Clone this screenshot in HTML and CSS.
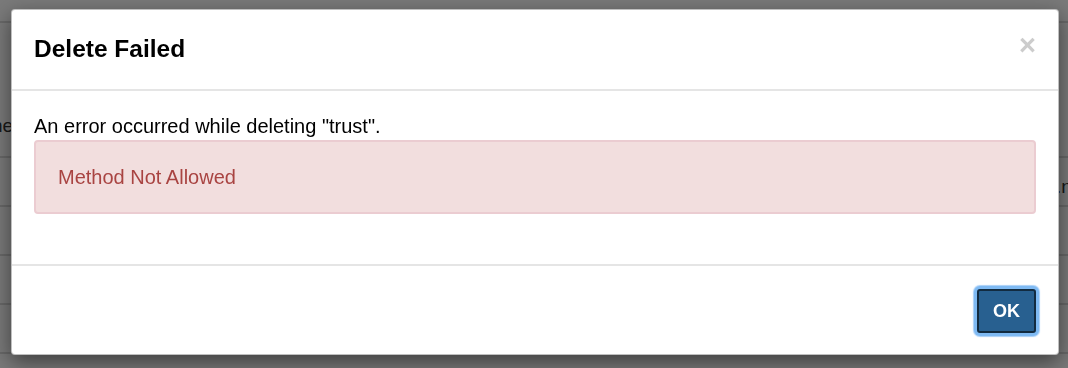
FILE: index.html
```html
<!DOCTYPE html>
<html>
<head>
<meta charset="utf-8">
<link rel="stylesheet" href="styles.css">
</head>
<body>
<div class="page">
  <div class="row row-top"></div>
  <div class="row row-head"><span class="clip-left">ne</span></div>
  <div class="row row-item"><span class="clip-right">.n</span></div>
  <div class="row row-item"></div>
  <div class="row row-item"></div>
  <div class="row row-item"></div>
</div>
<div class="backdrop"></div>
<div class="modal">
  <div class="modal-header">
    <h4 class="modal-title">Delete Failed</h4>
    <button class="close" type="button">×</button>
  </div>
  <div class="modal-body">
    <p class="message">An error occurred while deleting "trust".</p>
    <div class="alert">Method Not Allowed</div>
  </div>
  <div class="modal-footer">
    <button class="btn-ok" type="button">OK</button>
  </div>
</div>
</body>
</html>
```

FILE: styles.css
```css
html, body {
  margin: 0;
  padding: 0;
  background: #ffffff;
  font-family: "Liberation Sans", Arial, Helvetica, sans-serif;
  overflow: hidden;
  width: 1068px;
  height: 368px;
}

.page {
  width: 1068px;
}

.row {
  border-bottom: 2px solid #dcdcdc;
  display: flex;
  align-items: center;
  color: #333;
  font-size: 19px;
}

.row-top { height: 21px; }
.row-head { height: 133px; align-items: flex-end; }
.row-item { height: 47px; }

.clip-left {
  margin-left: -8px;
  margin-bottom: 19px;
  white-space: nowrap;
}

.clip-right {
  margin-left: 1056px;
  margin-top: 10px;
  white-space: nowrap;
}

.backdrop {
  position: fixed;
  inset: 0;
  background: rgba(0, 0, 0, 0.52);
}

.modal {
  position: absolute;
  left: 11px;
  top: 9px;
  width: 1046px;
  background: #fff;
  border: 1px solid rgba(0, 0, 0, 0.25);
  border-radius: 4px;
  box-shadow: 0 7px 21px rgba(0, 0, 0, 0.5);
}

.modal-header {
  display: flex;
  justify-content: space-between;
  align-items: flex-start;
  padding: 21px 22px 22px 22px;
  border-bottom: 2px solid #e5e5e5;
}

.modal-title {
  margin: 0;
  font-size: 24.5px;
  font-weight: bold;
  line-height: 36px;
  color: #000;
}

.close {
  border: 0;
  background: transparent;
  padding: 0;
  margin: -4px 0 0 0;
  font-family: "Liberation Sans", Arial, sans-serif;
  font-size: 29px;
  font-weight: bold;
  line-height: 36px;
  color: #cccccc;
}

.modal-body {
  padding: 21px 22px 21px 22px;
}

.message {
  margin: 0;
  font-size: 20px;
  line-height: 28px;
  color: #000;
}

.alert {
  margin-bottom: 29px;
  padding: 21px 22px;
  font-size: 20px;
  line-height: 28px;
  color: #a94442;
  background: #f2dede;
  border: 2px solid #ebccd1;
  border-radius: 4px;
}

.modal-footer {
  display: flex;
  justify-content: flex-end;
  padding: 23px 22px 21px 22px;
  border-top: 2px solid #e5e5e5;
}

.btn-ok {
  font-family: "Liberation Sans", Arial, sans-serif;
  font-size: 18px;
  font-weight: bold;
  line-height: 24px;
  color: #fff;
  background: #286090;
  border: 2px solid #122b40;
  border-radius: 3px;
  padding: 8px 14px;
  box-shadow: 0 0 0 3px #7fbaf3, 0 0 1px 4px #a9d0f8;
}
```
